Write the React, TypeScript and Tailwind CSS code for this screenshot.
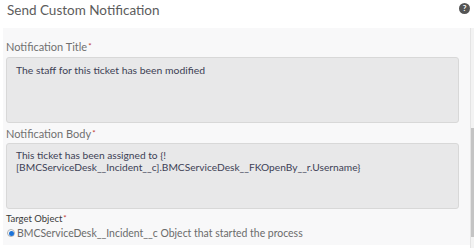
import React from "react";

const Label = ({ text, dark }: { text: string; dark?: boolean }) => (
  <div
    className={`h-[11px] leading-[11px] ${dark ? "text-[9.5px] text-[#3a3a3a]" : "text-[11px] text-[#707070]"}`}
  >
    {text}
    <span className="ml-[1px] text-[8px] align-top text-[#c23934]">*</span>
  </div>
);

const App = () => {
  return (
    <div className="w-[474px] h-[248px] bg-white overflow-hidden font-['Lato',sans-serif]">
      <div className="flex items-start justify-between h-[28px] pl-[7px] pr-[4px] pt-[1px]">
        <div className="text-[13.5px] leading-[18px] text-[#5c5c5c]">Send Custom Notification</div>
        <div className="mt-[2px] w-[11px] h-[11px] rounded-full bg-[#555] text-white text-[8px] leading-[11px] font-bold text-center">
          ?
        </div>
      </div>

      <div className="flex h-[220px]">
        <div className="ml-[3px] w-[467px] h-[217px] bg-[#f8f8f9] pl-[3px] pr-[11px] pt-[13px]">
          <Label text="Notification Title" />
          <div className="mt-[5px] h-[66px] rounded-[3px] border border-[#d8d8d8] bg-[#e8e8e9] px-[9px] pt-[6px] text-[10.4px] leading-[12px] text-[#3d3f55]">
            The staff for this ticket has been modified
          </div>

          <div className="mt-[5px]">
            <Label text="Notification Body" />
          </div>
          <div className="mt-[4px] h-[66px] rounded-[3px] border border-[#d8d8d8] bg-[#e8e8e9] px-[9px] pt-[5px] text-[10.2px] leading-[12px] text-[#3d3f55]">
            This ticket has been assigned to {"{!"}
            <br />
            [BMCServiceDesk__Incident__c].BMCServiceDesk__FKOpenBy__r.Username{"}"}
          </div>

          <div className="mt-[4px]">
            <Label text="Target Object" dark />
          </div>
          <div className="mt-[3px] flex items-center gap-[2px] h-[12px]">
            <span className="ml-[1px] flex items-center justify-center w-[8px] h-[8px] rounded-full bg-white border border-[#b0b0b0]">
              <span className="w-[5px] h-[5px] rounded-full bg-[#1b73d9]" />
            </span>
            <span className="text-[10.45px] leading-[12px] text-[#6b6b6b]">
              BMCServiceDesk__Incident__c Object that started the process
            </span>
          </div>
        </div>
        <div className="w-[4px] border-l border-[#e4e4e4] bg-[#f3f3f3] pt-[100px]">
          <div className="h-[109px] bg-[#c4c4c4]" />
        </div>
      </div>
    </div>
  );
};

export default App;
